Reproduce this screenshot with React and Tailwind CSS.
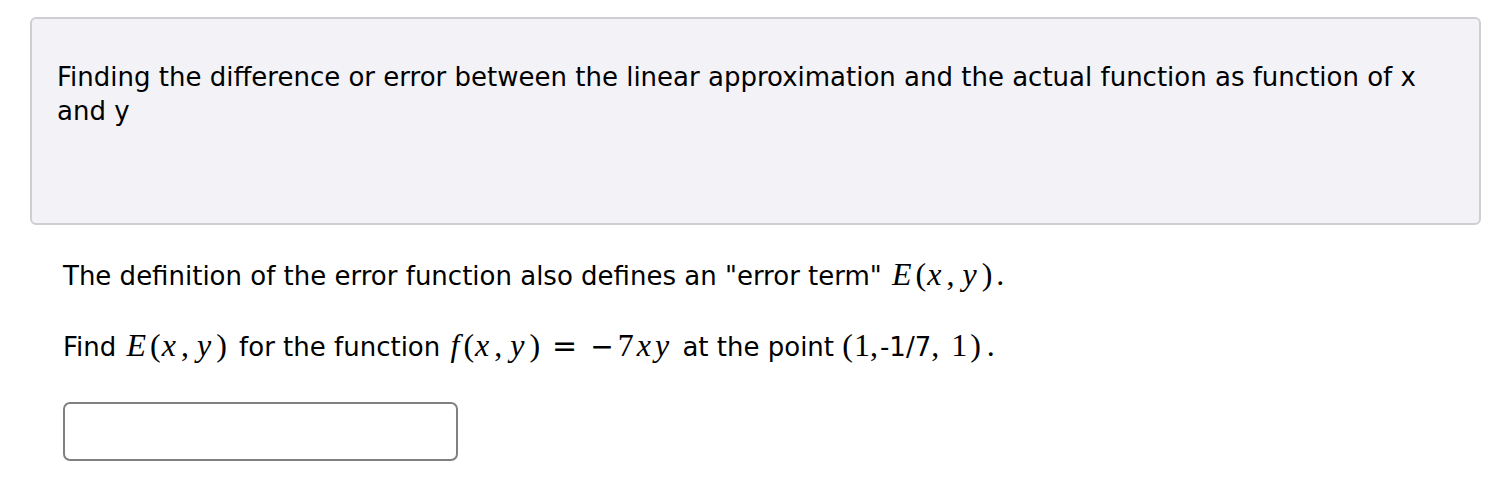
const serif = { fontFamily: '"Liberation Serif", "Times New Roman", serif' };
const dejasans = { fontFamily: '"DejaVu Sans", sans-serif' };

function M({ children, className = "" }) {
  return (
    <span className={"italic text-[32px] leading-none " + className} style={serif}>{children}</span>
  );
}
function R({ children, className = "" }) {
  return (
    <span className={"text-[32px] leading-none " + className} style={serif}>{children}</span>
  );
}

function Exy({ f = "E" }) {
  return (
    <span className="whitespace-nowrap">
      <M className="pl-[2px] pr-[4px]">{f}</M>
      <R className="pr-[1px]">(</R>
      <M className="pr-[5px]">x</M>
      <R className="pr-[8px]">,</R>
      <M className="pr-[5px]">y</M>
      <R className="pr-[4px]">)</R>
    </span>
  );
}

export default function App() {
  const sans = { fontFamily: '"DejaVu Sans", Verdana, sans-serif' };
  return (
    <div className="w-[1500px] h-[482px] bg-white text-black overflow-hidden" style={sans}>
      <div className="pt-[17px] pl-[30px]">
        <div className="w-[1451px] h-[208px] rounded-[6px] border-2 border-[#cfcfd3] bg-[#f2f2f7] pl-[25px] pr-[40px] pt-[41px] text-[26px] leading-[34px]">
          Finding the difference or error between the linear approximation and the actual function as function of x and y
        </div>
      </div>
      <div className="pl-[63px] pt-[33px] text-[26px]">
        <p className="leading-[36px] whitespace-nowrap">
          The definition of the error function also defines an "error term" <Exy />
          <R>.</R>
        </p>
        <p className="leading-[36px] mt-[35px] whitespace-nowrap">
          Find <Exy /> for the function <Exy f="f" />
          <span className="text-[30px] leading-none pl-[8px] pr-[13px]" style={dejasans}>=</span>
          <span className="text-[28px] leading-none pr-[4px]" style={dejasans}>−</span>
          <R className="pr-[3px]">7</R>
          <M className="pr-[4px]">x</M>
          <M className="pr-[5px]">y</M> at the point <R className="pr-[1px]">(</R>
          <R>1</R>
          <R className="pr-[2px]">,</R>-1/7<R className="pr-[12px]">,</R>
          <R className="pr-[3px]">1</R>
          <R className="pr-[6px]">)</R>
          <R>.</R>
        </p>
        <div className="mt-[37px] w-[395px] h-[59px] rounded-[7px] border-2 border-[#808080] bg-white"></div>
      </div>
    </div>
  );
}
